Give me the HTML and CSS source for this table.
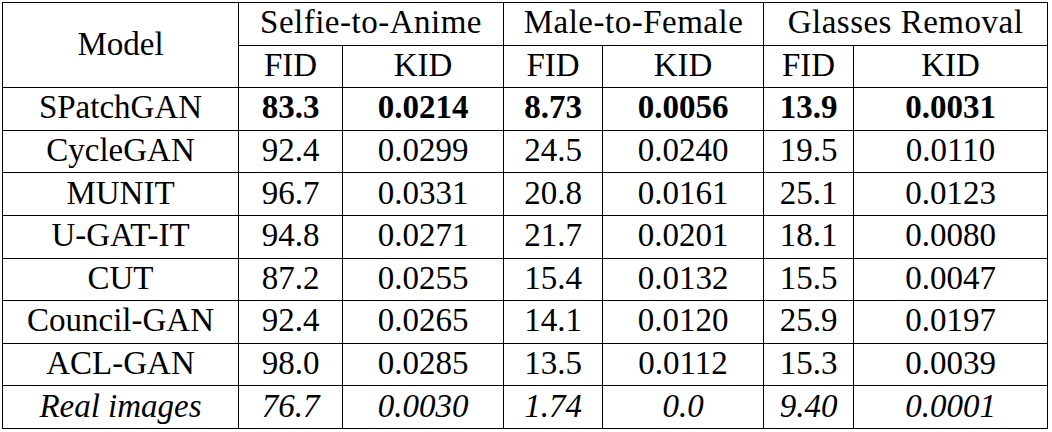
FILE: index.html
```html
<!DOCTYPE html>
<html>
<head>
<meta charset="utf-8">
<link rel="stylesheet" href="styles.css">
</head>
<body>
<table class="results">
  <colgroup>
    <col class="c-model">
    <col class="c-fid1">
    <col class="c-kid1">
    <col class="c-fid2">
    <col class="c-kid2">
    <col class="c-fid3">
    <col class="c-kid3">
  </colgroup>
  <thead>
    <tr class="h1">
      <th rowspan="2" class="model-head">Model</th>
      <th colspan="2" class="group">Selfie-to-Anime</th>
      <th colspan="2" class="group">Male-to-Female</th>
      <th colspan="2" class="group">Glasses Removal</th>
    </tr>
    <tr class="h2">
      <th>FID</th><th>KID</th>
      <th>FID</th><th>KID</th>
      <th>FID</th><th>KID</th>
    </tr>
  </thead>
  <tbody>
    <tr class="best">
      <td class="name">SPatchGAN</td>
      <td>83.3</td><td>0.0214</td><td>8.73</td><td>0.0056</td><td>13.9</td><td>0.0031</td>
    </tr>
    <tr>
      <td class="name">CycleGAN</td>
      <td>92.4</td><td>0.0299</td><td>24.5</td><td>0.0240</td><td>19.5</td><td>0.0110</td>
    </tr>
    <tr>
      <td class="name">MUNIT</td>
      <td>96.7</td><td>0.0331</td><td>20.8</td><td>0.0161</td><td>25.1</td><td>0.0123</td>
    </tr>
    <tr>
      <td class="name">U-GAT-IT</td>
      <td>94.8</td><td>0.0271</td><td>21.7</td><td>0.0201</td><td>18.1</td><td>0.0080</td>
    </tr>
    <tr>
      <td class="name">CUT</td>
      <td>87.2</td><td>0.0255</td><td>15.4</td><td>0.0132</td><td>15.5</td><td>0.0047</td>
    </tr>
    <tr>
      <td class="name">Council-GAN</td>
      <td>92.4</td><td>0.0265</td><td>14.1</td><td>0.0120</td><td>25.9</td><td>0.0197</td>
    </tr>
    <tr>
      <td class="name">ACL-GAN</td>
      <td>98.0</td><td>0.0285</td><td>13.5</td><td>0.0112</td><td>15.3</td><td>0.0039</td>
    </tr>
    <tr class="real">
      <td class="name">Real images</td>
      <td>76.7</td><td>0.0030</td><td>1.74</td><td>0.0</td><td>9.40</td><td>0.0001</td>
    </tr>
  </tbody>
</table>
</body>
</html>
```
FILE: styles.css
```css
html, body {
  margin: 0;
  padding: 0;
  background: #fff;
}
body {
  padding: 2px 0 0 2px;
}
.results {
  border-collapse: collapse;
  table-layout: fixed;
  width: 1045px;
  font-family: "Liberation Serif", "Times New Roman", serif;
  font-size: 33px;
  color: #000;
}
.c-model { width: 236px; }
.c-fid1 { width: 104px; }
.c-kid1 { width: 161px; }
.c-fid2 { width: 99px; }
.c-kid2 { width: 161px; }
.c-fid3 { width: 90px; }
.c-kid3 { width: 194px; }
.results th,
.results td {
  border: 1px solid #000;
  padding: 0 0 3px 0;
  text-align: center;
  vertical-align: middle;
  font-weight: normal;
  line-height: 38px;
  white-space: nowrap;
}
.results th.group {
  letter-spacing: 0.5px;
}
.results tr { height: 42.6px; }
.results tr.h1 { height: 42.6px; }
.best td { font-weight: bold; }
.best td.name { font-weight: normal; }
.real td { font-style: italic; }
```
